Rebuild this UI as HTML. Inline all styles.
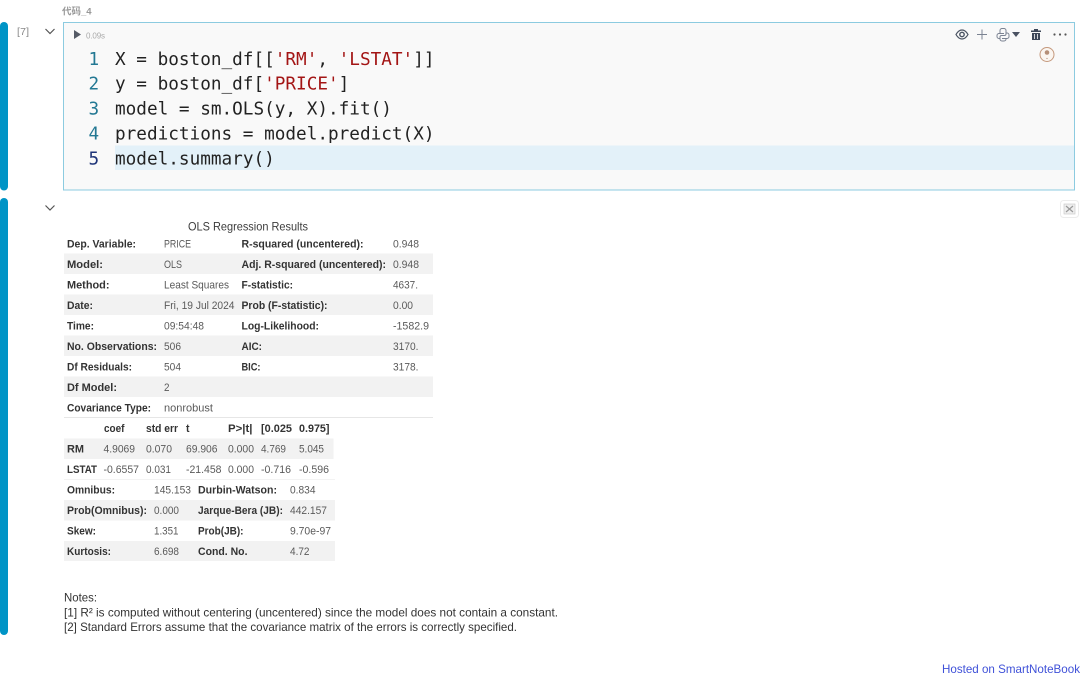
<!DOCTYPE html>
<html><head><meta charset="utf-8"><style>
html,body{margin:0;padding:0;background:#fff;width:1080px;height:678px;overflow:hidden}
svg{display:block;font-family:"Liberation Sans",sans-serif;filter:blur(.3px)}
.b{font-weight:bold;font-size:10.8px;fill:#333}
.v{font-size:10.8px;fill:#5a5a5a}
.c{font-family:"DejaVu Sans Mono",monospace;font-size:17.7px;fill:#222}
.n{font-family:"DejaVu Sans Mono",monospace;font-size:17.7px;fill:#237893}
.s{fill:#a31515}
.t{font-size:12px;fill:#333}
</style></head><body>
<svg width="1080" height="678" viewBox="0 0 1080 678" xmlns="http://www.w3.org/2000/svg">
<rect x="0" y="22" width="8" height="168.500" rx="4" fill="#0094c6"/>
<rect x="0" y="198" width="8" height="437" rx="4" fill="#0094c6"/>
<text x="62" y="14.500" font-family="'Liberation Sans','Noto Sans CJK SC',sans-serif" font-size="9.500" font-weight="bold" fill="#999">代码_4</text>
<text x="17" y="35" font-size="10.500" fill="#888" textLength="12">[7]</text>
<path d="M45.500 29l4.500 4.500 4.500-4.500" fill="none" stroke="#555" stroke-width="1.200"/>
<path d="M45.500 205.500l4.500 4.500 4.500-4.500" fill="none" stroke="#555" stroke-width="1.200"/>
<rect x="63.500" y="22.500" width="1011" height="167.500" fill="#f9f9f9" stroke="#8ccbe0" stroke-width="1"/>
<path d="M74 30l7 4.500-7 4.500z" fill="#555b66"/>
<text x="86" y="38.500" font-size="8" fill="#aaa" textLength="19">0.09s</text>
<rect x="115" y="145.500" width="959" height="24.500" fill="#e3f1f9"/>
<text class="n" x="88.500" y="65">1</text><text class="n" x="88.500" y="89.700">2</text><text class="n" x="88.500" y="114.600">3</text><text class="n" x="88.500" y="139.500">4</text><text class="n" x="88.500" y="164.300" style="fill:#1e3478">5</text>
<text class="c" x="115" y="65" textLength="319.500">X = boston_df[[<tspan class="s">'RM'</tspan>, <tspan class="s">'LSTAT'</tspan>]]</text>
<text class="c" x="115" y="89.700" textLength="234.300">y = boston_df[<tspan class="s">'PRICE'</tspan>]</text>
<text class="c" x="115" y="114.600" textLength="276.900">model = sm.OLS(y, X).fit()</text>
<text class="c" x="115" y="139.500" textLength="319.500">predictions = model.predict(X)</text>
<text class="c" x="115" y="164.300" textLength="159.800">model.summary()</text>
<g fill="none" stroke="#4a5362">
<path d="M956 34.500c2-3.500 4-4.500 6-4.500s4 1 6 4.500c-2 3.500-4 4.500-6 4.500s-4-1-6-4.500z" stroke-width="1.200"/><circle cx="962" cy="34.500" r="2.200" stroke-width="1.400"/>
<path d="M982 29.500v10M977 34.500h10" stroke="#7b8392" stroke-width="1"/>
<path d="M1000 33.500V30.500a2 2 0 0 1 2-2h2a2 2 0 0 1 2 2V34a1.500 1.500 0 0 1-1.500 1.500H1001.500a1.500 1.500 0 0 0-1.500 1.500V38.500h-1a2 2 0 0 1-2-2V35.500a2 2 0 0 1 2-2h5M1006 33h1a2 2 0 0 1 2 2v1.500a2 2 0 0 1-2 2h-5M1006 38.500a2 2 0 0 1 0 .5a2 2 0 0 1-2 2h-2a2 2 0 0 1-2-2V37.500" stroke="#7b8392" stroke-width="1"/>
</g>
<path d="M1012 32h8l-4 5z" fill="#4a5262"/>
<path d="M1031 30.500h10v1.500h-10zM1034 29h4v1.500h-4zM1032 33h8v7h-8z" fill="#3c4658"/>
<path d="M1034.500 34v5M1037.500 34v5" stroke="#f9f9f9" stroke-width=".8"/>
<circle cx="1054.500" cy="34.500" r="1.100" fill="#555"/><circle cx="1060" cy="34.500" r="1.100" fill="#555"/><circle cx="1065.500" cy="34.500" r="1.100" fill="#555"/>
<circle cx="1047" cy="54.500" r="7" fill="#fbf6f1" stroke="#c4987c" stroke-width="1"/><circle cx="1047" cy="52.500" r="2.300" fill="#b58f78"/><circle cx="1047" cy="58.500" r=".6" fill="#b58f78"/>
<rect x="1060.500" y="200.500" width="18" height="17" rx="3" fill="#fff" stroke="#ececec"/>
<rect x="1064" y="204" width="11" height="10" fill="#eee" stroke="#ccc" stroke-width=".7"/>
<path d="M1066 206l7 6M1073 206l-7 6" stroke="#999" stroke-width="1.200"/>

<text x="188" y="230.500" font-size="12" fill="#3c3c3c" textLength="120" lengthAdjust="spacingAndGlyphs">OLS Regression Results</text>
<g fill="#f2f2f2">
<rect x="64" y="253.500" width="369" height="20.500"/><rect x="64" y="294.500" width="369" height="20.500"/><rect x="64" y="335.500" width="369" height="20.500"/><rect x="64" y="376.500" width="369" height="20.500"/>
<rect x="64" y="438.500" width="269.500" height="20.500"/><rect x="64" y="500" width="271" height="20.500"/><rect x="64" y="541" width="271" height="20"/>
</g>
<rect x="64" y="417" width="369" height="1" fill="#e6e6e6"/>
<rect x="64" y="479" width="271" height="1" fill="#f3f3f3"/>

<text class="b" lengthAdjust="spacingAndGlyphs" x="67" y="247.500" textLength="69">Dep. Variable:</text><text class="v" lengthAdjust="spacingAndGlyphs" x="164" y="247.500" textLength="27">PRICE</text><text class="b" lengthAdjust="spacingAndGlyphs" x="241.500" y="247.500" textLength="122">R-squared (uncentered):</text><text class="v" lengthAdjust="spacingAndGlyphs" x="393" y="247.500" textLength="26">0.948</text>
<text class="b" lengthAdjust="spacingAndGlyphs" x="67" y="268" textLength="36">Model:</text><text class="v" lengthAdjust="spacingAndGlyphs" x="164" y="268" textLength="18">OLS</text><text class="b" lengthAdjust="spacingAndGlyphs" x="241.500" y="268" textLength="144.500">Adj. R-squared (uncentered):</text><text class="v" lengthAdjust="spacingAndGlyphs" x="393" y="268" textLength="26">0.948</text>
<text class="b" lengthAdjust="spacingAndGlyphs" x="67" y="288.500" textLength="42.500">Method:</text><text class="v" lengthAdjust="spacingAndGlyphs" x="164" y="288.500" textLength="65">Least Squares</text><text class="b" lengthAdjust="spacingAndGlyphs" x="241.500" y="288.500" textLength="51.500">F-statistic:</text><text class="v" lengthAdjust="spacingAndGlyphs" x="393" y="288.500" textLength="25">4637.</text>
<text class="b" lengthAdjust="spacingAndGlyphs" x="67" y="309" textLength="26">Date:</text><text class="v" lengthAdjust="spacingAndGlyphs" x="164" y="309" textLength="70.500">Fri, 19 Jul 2024</text><text class="b" lengthAdjust="spacingAndGlyphs" x="241.500" y="309" textLength="86">Prob (F-statistic):</text><text class="v" lengthAdjust="spacingAndGlyphs" x="393" y="309" textLength="20">0.00</text>
<text class="b" lengthAdjust="spacingAndGlyphs" x="67" y="329.500" textLength="27">Time:</text><text class="v" lengthAdjust="spacingAndGlyphs" x="164" y="329.500" textLength="40">09:54:48</text><text class="b" lengthAdjust="spacingAndGlyphs" x="241.500" y="329.500" textLength="77.500">Log-Likelihood:</text><text class="v" lengthAdjust="spacingAndGlyphs" x="393" y="329.500" textLength="36">-1582.9</text>
<text class="b" lengthAdjust="spacingAndGlyphs" x="67" y="350" textLength="90">No. Observations:</text><text class="v" lengthAdjust="spacingAndGlyphs" x="164" y="350" textLength="17">506</text><text class="b" lengthAdjust="spacingAndGlyphs" x="241.500" y="350" textLength="20.500">AIC:</text><text class="v" lengthAdjust="spacingAndGlyphs" x="393" y="350" textLength="25.500">3170.</text>
<text class="b" lengthAdjust="spacingAndGlyphs" x="67" y="370.500" textLength="65">Df Residuals:</text><text class="v" lengthAdjust="spacingAndGlyphs" x="164" y="370.500" textLength="17">504</text><text class="b" lengthAdjust="spacingAndGlyphs" x="241.500" y="370.500" textLength="19">BIC:</text><text class="v" lengthAdjust="spacingAndGlyphs" x="393" y="370.500" textLength="25.500">3178.</text>
<text class="b" lengthAdjust="spacingAndGlyphs" x="67" y="391" textLength="50">Df Model:</text><text class="v" lengthAdjust="spacingAndGlyphs" x="164" y="391" textLength="5.500">2</text>
<text class="b" lengthAdjust="spacingAndGlyphs" x="67" y="411.500" textLength="84">Covariance Type:</text><text class="v" lengthAdjust="spacingAndGlyphs" x="164" y="411.500" textLength="49">nonrobust</text>

<text class="b" lengthAdjust="spacingAndGlyphs" x="104" y="432" textLength="20.500">coef</text><text class="b" lengthAdjust="spacingAndGlyphs" x="146" y="432" textLength="32">std err</text><text class="b" lengthAdjust="spacingAndGlyphs" x="186" y="432" textLength="3.500">t</text><text class="b" lengthAdjust="spacingAndGlyphs" x="228" y="432" textLength="24.500">P&gt;|t|</text><text class="b" lengthAdjust="spacingAndGlyphs" x="261" y="432" textLength="31">[0.025</text><text class="b" lengthAdjust="spacingAndGlyphs" x="299" y="432" textLength="30.500">0.975]</text>
<text class="b" lengthAdjust="spacingAndGlyphs" x="67" y="452.500" textLength="17">RM</text><text class="v" lengthAdjust="spacingAndGlyphs" x="103.500" y="452.500" textLength="31.500">4.9069</text><text class="v" lengthAdjust="spacingAndGlyphs" x="146" y="452.500" textLength="26">0.070</text><text class="v" lengthAdjust="spacingAndGlyphs" x="186" y="452.500" textLength="31.500">69.906</text><text class="v" lengthAdjust="spacingAndGlyphs" x="228" y="452.500" textLength="26">0.000</text><text class="v" lengthAdjust="spacingAndGlyphs" x="261" y="452.500" textLength="25">4.769</text><text class="v" lengthAdjust="spacingAndGlyphs" x="299" y="452.500" textLength="25">5.045</text>
<text class="b" lengthAdjust="spacingAndGlyphs" x="67" y="473" textLength="30">LSTAT</text><text class="v" lengthAdjust="spacingAndGlyphs" x="103.500" y="473" textLength="35.500">-0.6557</text><text class="v" lengthAdjust="spacingAndGlyphs" x="146" y="473" textLength="25">0.031</text><text class="v" lengthAdjust="spacingAndGlyphs" x="186" y="473" textLength="35.500">-21.458</text><text class="v" lengthAdjust="spacingAndGlyphs" x="228" y="473" textLength="26">0.000</text><text class="v" lengthAdjust="spacingAndGlyphs" x="261" y="473" textLength="30">-0.716</text><text class="v" lengthAdjust="spacingAndGlyphs" x="299" y="473" textLength="30">-0.596</text>
<text class="b" lengthAdjust="spacingAndGlyphs" x="67" y="493.500" textLength="48">Omnibus:</text><text class="v" lengthAdjust="spacingAndGlyphs" x="154" y="493.500" textLength="37">145.153</text><text class="b" lengthAdjust="spacingAndGlyphs" x="198" y="493.500" textLength="79">Durbin-Watson:</text><text class="v" lengthAdjust="spacingAndGlyphs" x="290" y="493.500" textLength="25.500">0.834</text>
<text class="b" lengthAdjust="spacingAndGlyphs" x="67" y="514" textLength="80">Prob(Omnibus):</text><text class="v" lengthAdjust="spacingAndGlyphs" x="154" y="514" textLength="25">0.000</text><text class="b" lengthAdjust="spacingAndGlyphs" x="198" y="514" textLength="85">Jarque-Bera (JB):</text><text class="v" lengthAdjust="spacingAndGlyphs" x="290" y="514" textLength="37">442.157</text>
<text class="b" lengthAdjust="spacingAndGlyphs" x="67" y="534.500" textLength="29">Skew:</text><text class="v" lengthAdjust="spacingAndGlyphs" x="154" y="534.500" textLength="24.500">1.351</text><text class="b" lengthAdjust="spacingAndGlyphs" x="198" y="534.500" textLength="45.500">Prob(JB):</text><text class="v" lengthAdjust="spacingAndGlyphs" x="290" y="534.500" textLength="41">9.70e-97</text>
<text class="b" lengthAdjust="spacingAndGlyphs" x="67" y="555" textLength="44">Kurtosis:</text><text class="v" lengthAdjust="spacingAndGlyphs" x="154" y="555" textLength="25">6.698</text><text class="b" lengthAdjust="spacingAndGlyphs" x="198" y="555" textLength="49.500">Cond. No.</text><text class="v" lengthAdjust="spacingAndGlyphs" x="290" y="555" textLength="19.500">4.72</text>

<text class="t" lengthAdjust="spacingAndGlyphs" x="64" y="601.500" textLength="33">Notes:</text>
<text class="t" lengthAdjust="spacingAndGlyphs" x="64" y="616.500" textLength="494">[1] R² is computed without centering (uncentered) since the model does not contain a constant.</text>
<text class="t" lengthAdjust="spacingAndGlyphs" x="64" y="631" textLength="453">[2] Standard Errors assume that the covariance matrix of the errors is correctly specified.</text>
<text x="942" y="673" font-size="12" fill="#3f51d8" textLength="138" lengthAdjust="spacingAndGlyphs">Hosted on SmartNoteBook</text>
</svg>
</body></html>
